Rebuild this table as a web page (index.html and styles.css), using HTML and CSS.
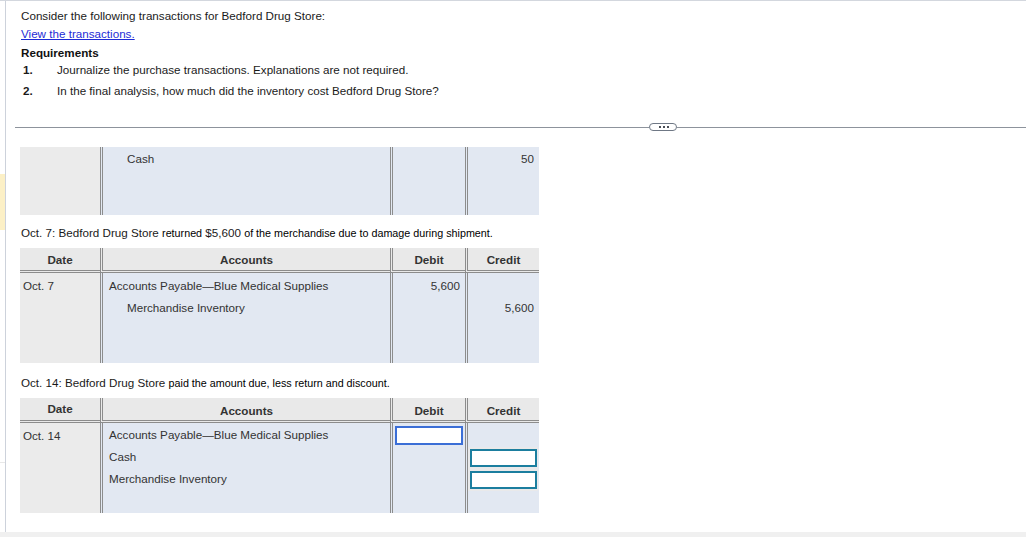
FILE: index.html
```html
<!DOCTYPE html>
<html>
<head>
<meta charset="utf-8">
<title>Bedford Drug Store</title>
<link rel="stylesheet" href="styles.css">
</head>
<body>
<div class="frame">
  <div class="gutter">
    <div class="mark"></div>
    <div class="tick"></div>
  </div>
  <div class="page">
    <div class="intro">
      <p class="lead">Consider the following transactions for Bedford Drug Store:</p>
      <p class="lead link-line"><a class="link" href="#">View the transactions.</a></p>
      <p class="req-title">Requirements</p>
      <ol class="reqs">
        <li class="req"><span class="num">1.</span><span>Journalize the purchase transactions. Explanations are not required.</span></li>
        <li class="req"><span class="num">2.</span><span>In the final analysis, how much did the inventory cost Bedford Drug Store?</span></li>
      </ol>
    </div>

    <div class="divider">
      <span class="rule rule-left"></span>
      <span class="pill"><i class="dot"></i><i class="dot"></i><i class="dot"></i></span>
      <span class="rule rule-right"></span>
    </div>

    <div class="work">
      <div class="journal">
        <div class="cell date body short"></div>
        <div class="cell acct body short pad1"><div class="line indent">Cash</div></div>
        <div class="cell debit body short"></div>
        <div class="cell credit body short pad1"><div class="line">50</div></div>
      </div>

      <p class="caption">Oct. 7: Bedford Drug Store <span class="small">returned</span> $5,600 <span class="small">of the merchandise due to damage during shipment.</span></p>

      <div class="journal">
        <div class="cell head">Date</div>
        <div class="cell head sep">Accounts</div>
        <div class="cell head sep">Debit</div>
        <div class="cell head sep">Credit</div>
        <div class="cell date body pad2"><div class="line">Oct. 7</div></div>
        <div class="cell acct body pad2">
          <div class="line">Accounts Payable—Blue Medical Supplies</div>
          <div class="line indent">Merchandise Inventory</div>
        </div>
        <div class="cell debit body pad2"><div class="line">5,600</div></div>
        <div class="cell credit body pad2"><div class="line"></div><div class="line">5,600</div></div>
      </div>

      <p class="caption second">Oct. 14: Bedford Drug Store <span class="small">paid the amount due, less return and discount.</span></p>

      <div class="journal">
        <div class="cell head head-date">Date</div>
        <div class="cell head sep head-low">Accounts</div>
        <div class="cell head sep head-low">Debit</div>
        <div class="cell head sep head-low">Credit</div>
        <div class="cell date body pad1"><div class="line low">Oct. 14</div></div>
        <div class="cell acct body pad1">
          <div class="line">Accounts Payable—Blue Medical Supplies</div>
          <div class="line">Cash</div>
          <div class="line">Merchandise Inventory</div>
        </div>
        <div class="cell debit body entry-cell">
          <div class="line input-line"><input class="entry entry-active" type="text"></div>
        </div>
        <div class="cell credit body entry-stack">
          <div class="line"></div>
          <div class="entry-group">
            <input class="entry entry-teal" type="text">
            <input class="entry entry-teal" type="text">
          </div>
        </div>
      </div>
    </div>
  </div>
</div>
<div class="bottom-bar"></div>
</body>
</html>
```

FILE: styles.css
```css
* { box-sizing: border-box; }

html, body {
  margin: 0;
  padding: 0;
  background: #ffffff;
}

body {
  font-family: "Liberation Sans", Arial, sans-serif;
  font-size: 11.65px;
  color: #1a1a1a;
  width: 1026px;
  height: 537px;
  overflow: hidden;
}

.frame {
  display: flex;
  height: 532px;
  border-top: 1px solid #d3d7de;
}

.gutter {
  width: 5px;
  flex: none;
}

.mark {
  margin-top: 173px;
  height: 56px;
  background: #fcf0c6;
}

.tick {
  margin-top: 232px;
  height: 1px;
  background: #e8e8e8;
}

.page {
  flex: 1;
  border-left: 1px solid #cdd2db;
  padding-top: 5px;
}

/* intro */
.intro {
  padding-left: 15px;
}

.lead {
  margin: 0;
  line-height: 19px;
  height: 19px;
}

.lead.link-line {
  line-height: 17px;
  height: 17px;
}

.link {
  color: #1d2bd6;
  text-decoration: underline;
}

.req-title {
  margin: 1px 0 0;
  font-weight: bold;
  line-height: 19px;
  height: 19px;
  color: #111;
}

.reqs {
  list-style: none;
  margin: 0;
  padding: 0;
  display: flex;
  flex-direction: column;
  gap: 5px;
}

.req {
  display: flex;
  line-height: 16px;
  height: 16px;
  padding-left: 2px;
}

.num {
  width: 34px;
  flex: none;
  font-weight: bold;
}

/* divider */
.divider {
  display: flex;
  align-items: center;
  height: 8px;
  margin: 24px 0 16px 9px;
}

.rule {
  height: 1px;
  background: #8d939c;
}

.rule-left {
  width: 634px;
  flex: none;
}

.rule-right {
  flex: 1;
}

.pill {
  width: 28px;
  height: 8px;
  flex: none;
  border: 1px solid #6f7885;
  border-radius: 4px;
  background: #fff;
  display: flex;
  align-items: center;
  justify-content: center;
  gap: 2px;
  padding-left: 1px;
}

.dot {
  width: 2px;
  height: 2px;
  background: #4a4f57;
  display: block;
}

/* journal tables */
.work {
  padding-left: 14px;
}

.journal {
  display: grid;
  grid-template-columns: 80px 290px 75px 74px;
  width: 519px;
  color: #333;
}

.cell {
  background: #e2e8f2;
}

.head {
  background: #e9e9e9;
  height: 25px;
  line-height: 24px;
  border-bottom: 3px double #8c8c8c;
  text-align: center;
  font-weight: bold;
  color: #333;
}

.head-date {
  line-height: 22px;
}

.head-low {
  line-height: 26px;
}

.sep,
.acct,
.debit,
.credit {
  border-left: 3px double #8c8c8c;
}

.date {
  background: #ebebeb;
  padding-left: 3px;
}

.body {
  height: 90px;
}

.body.short {
  height: 68px;
}

.pad2 { padding-top: 2px; }
.pad1 { padding-top: 1px; }

.acct {
  padding-left: 6px;
}

.debit {
  text-align: right;
  padding-right: 5px;
}

.credit {
  text-align: right;
  padding-right: 5px;
}

.line {
  height: 22px;
  line-height: 22px;
  white-space: nowrap;
}

.line.low {
  line-height: 24px;
}

.indent {
  padding-left: 18px;
}

.caption {
  margin: 10px 0 7px 1px;
  line-height: 16px;
  height: 16px;
  color: #1a1a1a;
  white-space: nowrap;
}

.caption.second {
  margin-top: 12px;
}

.small {
  font-size: 10.75px;
  color: #000;
}

/* inputs */
.entry-cell {
  padding: 1px 0 0 2px;
}

.input-line {
  display: flex;
  align-items: center;
}

.entry {
  display: block;
  margin: 0;
  padding: 0;
  background: #fff;
  font: inherit;
  outline: none;
}

.entry-active {
  width: 68px;
  height: 19px;
  border: 2px solid #3b6ed6;
}

.entry-stack {
  padding: 1px 1px 0 0;
}

.entry-group {
  margin-top: 1px;
  padding: 2px 0 2px 2px;
  background: #e9e9ea;
  display: flex;
  flex-direction: column;
  gap: 4px;
}

.entry-teal {
  width: 67px;
  height: 18px;
  border: 2px solid #1b7e9f;
}

.bottom-bar {
  height: 5px;
  background: #f0f0f0;
}
```
